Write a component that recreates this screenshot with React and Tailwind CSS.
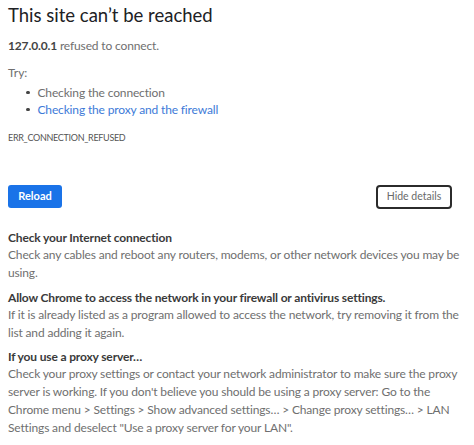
import React from 'react';

const font = { fontFamily: 'Lato, "Noto Sans", sans-serif' };

function Section({ title, children, className = '' }) {
  return (
    <div className={className}>
      <p className="font-bold text-[#3a3a3a] text-[12px] leading-[17px] tracking-[-0.15px]">{title}</p>
      <p className="text-[#6f6f6f] text-[12px] leading-[18px] tracking-[-0.15px]">{children}</p>
    </div>
  );
}

export default function App() {
  return (
    <div className="w-[474px] h-[445px] bg-white overflow-hidden px-2 pt-px" style={font}>
      <h1 className="text-[18.5px] leading-[28px] text-[#202124] font-normal">This site can’t be reached</h1>
      <p className="mt-[8px] text-[12px] leading-[18px] text-[#6f6f6f] tracking-[-0.15px]">
        <span className="font-bold text-[#444]">127.0.0.1</span> refused to connect.
      </p>
      <p className="mt-[9px] text-[12px] leading-[18px] text-[#6f6f6f]">Try:</p>
      <ul className="mt-[2px] pl-[18px] text-[12px] leading-[17px] text-[#6f6f6f] tracking-[-0.15px]">
        <li className="flex items-center gap-[8px]">
          <span className="w-[3.5px] h-[3.5px] rounded-full bg-[#444]" />
          Checking the connection
        </li>
        <li className="flex items-center gap-[8px] text-[#3d7ad8]">
          <span className="w-[3.5px] h-[3.5px] rounded-full bg-[#444]" />
          Checking the proxy and the firewall
        </li>
      </ul>
      <p className="mt-[13px] text-[9px] leading-[14px] text-[#555] tracking-[-0.3px]">ERR_CONNECTION_REFUSED</p>
      <div className="mt-[40px] flex items-start justify-between pr-[14px]">
        <button className="h-[23px] w-[54px] rounded-[3px] bg-[#1a73e8] text-white text-[11px] font-bold">Reload</button>
        <button className="h-[24px] w-[76px] rounded-[4px] border-2 border-[#2b2b2b] bg-white text-[#6a6a6a] text-[10.5px]">Hide details</button>
      </div>
      <Section title="Check your Internet connection" className="mt-[20px]">
        Check any cables and reboot any routers, modems, or other network devices you may be using.
      </Section>
      <Section title="Allow Chrome to access the network in your firewall or antivirus settings." className="mt-[7px]">
        If it is already listed as a program allowed to access the network, try removing it from the list and adding it again.
      </Section>
      <Section title="If you use a proxy server…" className="mt-[6px]">
        Check your proxy settings or contact your network administrator to make sure the proxy server is working. If you don't believe you should be using a proxy server: Go to the Chrome menu &gt; Settings &gt; Show advanced settings… &gt; Change proxy settings… &gt; LAN Settings and deselect "Use a proxy server for your LAN".
      </Section>
    </div>
  );
}
